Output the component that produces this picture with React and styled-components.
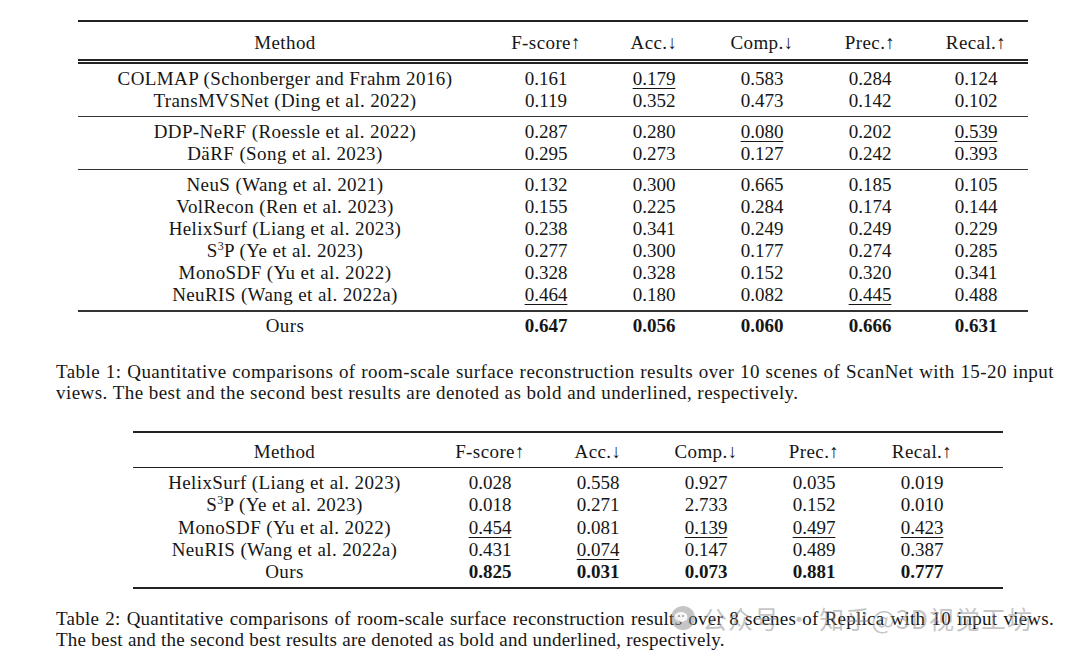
import React from "react";
import styled, { createGlobalStyle } from "styled-components";

const GlobalStyle = createGlobalStyle`
  body {
    margin: 0;
    background: #fff;
    color: #161616;
    font-family: "Liberation Serif", "Times New Roman", serif;
  }
`;

const Page = styled.div`
  padding: 20px 0 0 0;
  width: 1080px;
`;

const Table = styled.table`
  border-collapse: collapse;
  table-layout: fixed;
  width: ${(p) => p.$width}px;
  margin: ${(p) => p.$top || 0}px 0 0 ${(p) => p.$left}px;
  font-size: 19px;
  border-top: 2px solid #222;
  border-bottom: ${(p) => (p.$bottom ? "2px solid #222" : "none")};
`;

const HeadCell = styled.th`
  font-weight: normal;
  line-height: 22px;
  letter-spacing: 0.4px;
  padding: ${(p) => p.$padTop}px 0 ${(p) => p.$padBottom}px 0;
  padding-right: ${(p) => p.$right || 0}px;
  text-align: center;
  white-space: nowrap;
  border-bottom: ${(p) => (p.$double ? "5px double #222" : "1px solid #222")};
`;

const Group = styled.tbody`
  & > tr:first-child > td {
    padding-top: ${(p) => (p.$first ? 4 : p.$padTop || 4)}px;
    border-top: ${(p) => (p.$first ? "none" : `${p.$ruleW || 1}px solid #333`)};
  }
  & > tr:last-child > td {
    padding-bottom: ${(p) => p.$padBottom ?? 4}px;
  }
`;

const Cell = styled.td`
  line-height: ${(p) => p.$lh || 22}px;
  padding: 0;
  padding-right: ${(p) => p.$right || 0}px;
  text-align: center;
  white-space: nowrap;
  letter-spacing: ${(p) => (p.$text ? "0.4px" : "0")};
  font-weight: ${(p) => (p.$bold ? "bold" : "normal")};
`;

const Under = styled.span`
  text-decoration: underline;
  text-decoration-thickness: 1px;
  text-underline-offset: 3px;
`;

const Sup = styled.sup`
  font-size: 12px;
  line-height: 0;
  vertical-align: 7px;
`;

const Caption = styled.p`
  position: relative;
  margin: ${(p) => p.$top}px 0 0 56px;
  width: 998px;
  font-size: 19px;
  letter-spacing: ${(p) => p.$spacing}px;
  line-height: 20.5px;
  text-align: justify;
`;

const Watermark = styled.div`
  position: absolute;
  left: 614px;
  top: -6px;
  display: flex;
  align-items: center;
  gap: 6px;
  color: rgba(140, 140, 140, 0.5);
  font-family: "Noto Sans CJK SC", sans-serif;
  font-size: 25px;
  line-height: 30px;
  letter-spacing: 1px;
  pointer-events: none;
`;

const WeChatIcon = () => (
  <svg width="26" height="26" viewBox="0 0 26 26">
    <circle cx="13" cy="13" r="12" fill="rgba(140,140,140,0.5)" />
    <ellipse cx="11" cy="12" rx="6.5" ry="5" fill="#fff" opacity="0.85" />
    <circle cx="9" cy="11" r="1" fill="rgba(140,140,140,0.9)" />
    <circle cx="13" cy="11" r="1" fill="rgba(140,140,140,0.9)" />
  </svg>
);

const cols1 = [414, 108, 108, 108, 108, 104];
const cols2 = [303, 108, 108, 108, 108, 135];
const heads = ["Method", "F-score↑", "Acc.↓", "Comp.↓", "Prec.↑", "Recal.↑"];

const table1 = [
  [
    ["COLMAP (Schonberger and Frahm 2016)", "0.161", "_0.179", "0.583", "0.284", "0.124"],
    ["TransMVSNet (Ding et al. 2022)", "0.119", "0.352", "0.473", "0.142", "0.102"],
  ],
  [
    ["DDP-NeRF (Roessle et al. 2022)", "0.287", "0.280", "_0.080", "0.202", "_0.539"],
    ["DäRF (Song et al. 2023)", "0.295", "0.273", "0.127", "0.242", "0.393"],
  ],
  [
    ["NeuS (Wang et al. 2021)", "0.132", "0.300", "0.665", "0.185", "0.105"],
    ["VolRecon (Ren et al. 2023)", "0.155", "0.225", "0.284", "0.174", "0.144"],
    ["HelixSurf (Liang et al. 2023)", "0.238", "0.341", "0.249", "0.249", "0.229"],
    ["S3P", "0.277", "0.300", "0.177", "0.274", "0.285"],
    ["MonoSDF (Yu et al. 2022)", "0.328", "0.328", "0.152", "0.320", "0.341"],
    ["NeuRIS (Wang et al. 2022a)", "_0.464", "0.180", "0.082", "_0.445", "0.488"],
  ],
  [["Ours", "*0.647", "*0.056", "*0.060", "*0.666", "*0.631"]],
];

const table2 = [
  ["HelixSurf (Liang et al. 2023)", "0.028", "0.558", "0.927", "0.035", "0.019"],
  ["S3P", "0.018", "0.271", "2.733", "0.152", "0.010"],
  ["MonoSDF (Yu et al. 2022)", "_0.454", "0.081", "_0.139", "_0.497", "_0.423"],
  ["NeuRIS (Wang et al. 2022a)", "0.431", "_0.074", "0.147", "0.489", "0.387"],
  ["Ours", "*0.825", "*0.031", "*0.073", "*0.881", "*0.777"],
];

const Value = ({ v }) => {
  if (v === "S3P")
    return (
      <>
        S<Sup>3</Sup>P (Ye et al. 2023)
      </>
    );
  if (v.startsWith("_")) return <Under>{v.slice(1)}</Under>;
  if (v.startsWith("*")) return v.slice(1);
  return v;
};

const Row = ({ row, last, lh }) => (
  <tr>
    {row.map((v, i) => (
      <Cell
        key={i}
        $text={i === 0}
        $bold={v.startsWith("*")}
        $right={i === 5 ? last : 0}
        $lh={lh}
      >
        <Value v={v} />
      </Cell>
    ))}
  </tr>
);

const App = () => {
  return (
    <Page>
      <GlobalStyle />
      <Table $width={950} $left={78}>
        <colgroup>
          {cols1.map((w, i) => (
            <col key={i} style={{ width: w }} />
          ))}
        </colgroup>
        <thead>
          <tr>
            {heads.map((h) => (
              <HeadCell key={h} $padTop={10} $padBottom={5} $double>
                {h}
              </HeadCell>
            ))}
          </tr>
        </thead>
        {table1.map((group, g) => (
          <Group
            key={g}
            $first={g === 0}
            $padTop={g === 3 ? 3 : 4}
            $ruleW={g === 3 ? 2 : 1}
            $padBottom={g === 3 ? 0 : 4}
          >
            {group.map((row, r) => (
              <Row key={r} row={row} last={0} />
            ))}
          </Group>
        ))}
      </Table>

      <Caption $top={25} $spacing={0.45}>
        Table 1: Quantitative comparisons of room-scale surface reconstruction results over 10 scenes of
        ScanNet with 15-20 input views. The best and the second best results are denoted as bold and
        underlined, respectively.
      </Caption>

      <Table $width={870} $left={133} $top={28} $bottom>
        <colgroup>
          {cols2.map((w, i) => (
            <col key={i} style={{ width: w }} />
          ))}
        </colgroup>
        <thead>
          <tr>
            {heads.map((h, i) => (
              <HeadCell key={h} $padTop={8} $padBottom={4} $right={i === 5 ? 27 : 0}>
                {h}
              </HeadCell>
            ))}
          </tr>
        </thead>
        <Group $padTop={4} $ruleW={0} $first>
          {table2.map((row, r) => (
            <Row key={r} row={row} last={27} lh={22.25} />
          ))}
        </Group>
      </Table>

      <Caption $top={20} $spacing={0.25}>
        Table 2: Quantitative comparisons of room-scale surface reconstruction results over 8 scenes of
        Replica with 10 input views. The best and the second best results are denoted as bold and
        underlined, respectively.
        <Watermark>
          <WeChatIcon />
          <span>公众号 · 知乎@3D视觉工坊</span>
        </Watermark>
      </Caption>
    </Page>
  );
};

export default App;
